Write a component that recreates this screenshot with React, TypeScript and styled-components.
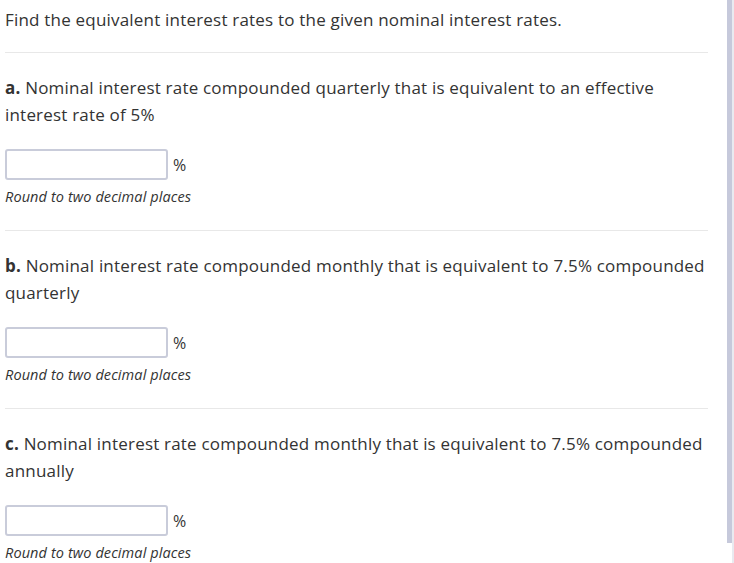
import styled, { createGlobalStyle } from "styled-components";

const GlobalStyle = createGlobalStyle`
  html, body {
    margin: 0;
    padding: 0;
    background: #ffffff;
  }
  body {
    font-family: "Open Sans", "Liberation Sans", sans-serif;
    color: #333333;
  }
`;

const Page = styled.div`
  display: flex;
  width: 734px;
  height: 563px;
  overflow: hidden;
`;

const Main = styled.div`
  width: 703px;
  padding-left: 5px;
  flex-shrink: 0;
`;

const Gutter = styled.div`
  flex: 1;
  display: flex;
  justify-content: flex-end;
`;

const Thumb = styled.div`
  width: 5px;
  height: 543px;
  background: #c6c9db;
`;

const Track = styled.div`
  width: 2px;
  height: 100%;
  background: #e9eaf0;
`;

const Intro = styled.p`
  margin: 0;
  padding: 6px 0 19px;
  font-size: 17px;
  letter-spacing: 0.2px;
  line-height: 27px;
`;

const Part = styled.section`
  border-top: 1px solid #e8e8e8;
  padding: 21px 0 22px;
`;

const Question = styled.p`
  margin: 0;
  font-size: 17px;
  letter-spacing: 0.2px;
  line-height: 27px;
`;

const Label = styled.b`
  font-weight: 700;
`;

const AnswerRow = styled.div`
  display: flex;
  align-items: center;
  gap: 5px;
  margin-top: 21px;
`;

const Field = styled.input`
  box-sizing: border-box;
  width: 163px;
  height: 31px;
  border: 2px solid #c9ccda;
  border-radius: 3px;
  background: #ffffff;
  outline: none;
`;

const Unit = styled.span`
  font-size: 16px;
  color: #333333;
`;

const Hint = styled.div`
  margin-top: 6px;
  font-size: 14.5px;
  letter-spacing: 0.1px;
  font-style: italic;
  line-height: 22px;
  color: #333333;
`;

const parts = [
  {
    label: "a.",
    text: "Nominal interest rate compounded quarterly that is equivalent to an effective interest rate of 5%",
  },
  {
    label: "b.",
    text: "Nominal interest rate compounded monthly that is equivalent to 7.5% compounded quarterly",
  },
  {
    label: "c.",
    text: "Nominal interest rate compounded monthly that is equivalent to 7.5% compounded annually",
  },
];

export default function App() {
  return (
    <>
      <GlobalStyle />
      <Page>
        <Main>
          <Intro>Find the equivalent interest rates to the given nominal interest rates.</Intro>
          {parts.map((p) => (
            <Part key={p.label}>
              <Question>
                <Label>{p.label} </Label>
                {p.text}
              </Question>
              <AnswerRow>
                <Field type="text" />
                <Unit>%</Unit>
              </AnswerRow>
              <Hint>Round to two decimal places</Hint>
            </Part>
          ))}
        </Main>
        <Gutter>
          <Thumb />
          <Track />
        </Gutter>
      </Page>
    </>
  );
}
